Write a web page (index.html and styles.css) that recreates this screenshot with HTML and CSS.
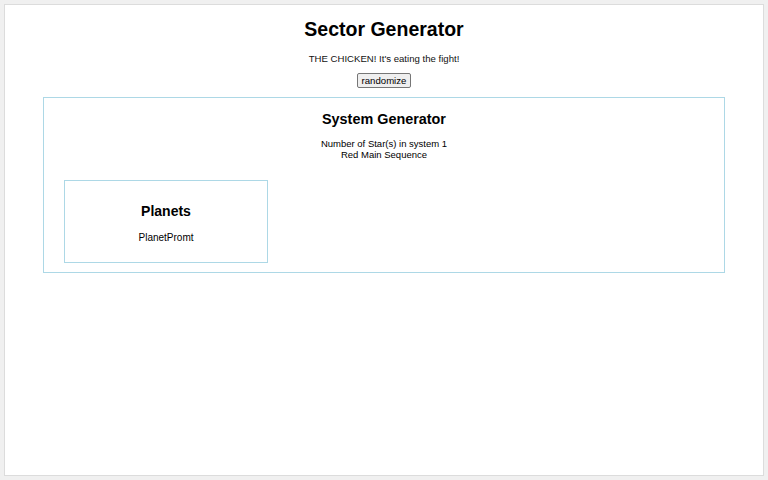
FILE: index.html
```html
<!DOCTYPE html>
<html>
<head>
<meta charset="utf-8">
<link rel="stylesheet" href="styles.css">
</head>
<body>
<div class="frame">
  <h1 class="title">Sector Generator</h1>
  <p class="quote">THE CHICKEN! It's eating the fight!</p>
  <div class="actions"><button class="btn">randomize</button></div>
  <section class="system">
    <h2 class="sys-title">System Generator</h2>
    <div class="sys-info">
      <div>Number of Star(s) in system 1</div>
      <div>Red Main Sequence</div>
    </div>
    <div class="planets">
      <h3 class="pl-title">Planets</h3>
      <p class="pl-text">PlanetPromt</p>
    </div>
  </section>
</div>
</body>
</html>
```
FILE: styles.css
```css
html, body { margin: 0; padding: 0; }
body {
  background: #f0f0f0;
  font-family: "Liberation Sans", Arial, sans-serif;
  color: #000;
  padding: 4px;
  height: 480px;
  box-sizing: border-box;
}
.frame {
  background: #fff;
  border: 1px solid #dcdcdc;
  height: 472px;
  box-sizing: border-box;
  padding: 0 38px;
  text-align: center;
}
.title {
  margin: 0;
  padding-top: 12px;
  font-size: 19.5px;
  line-height: 24px;
  font-weight: bold;
}
.quote {
  margin: 0;
  padding-top: 12px;
  font-size: 9.6px;
  line-height: 12px;
  color: #111;
}
.actions { padding-top: 8px; line-height: 0; }
.btn {
  font-family: "Liberation Sans", Arial, sans-serif;
  font-size: 9.6px;
  line-height: 11px;
  padding: 1px 4px;
  border: 1px solid #767676;
  border-radius: 2px;
  background: #efefef;
  color: #000;
}
.system {
  margin-top: 9px;
  border: 1px solid #add8e6;
  padding: 0 20px 9px;
  text-align: center;
}
.sys-title {
  margin: 0;
  padding-top: 12px;
  font-size: 14.4px;
  line-height: 18px;
  font-weight: bold;
}
.sys-info {
  margin-top: 10px;
  font-size: 9.5px;
  line-height: 11px;
}
.planets {
  margin-top: 20px;
  width: 204px;
  height: 83px;
  box-sizing: border-box;
  border: 1px solid #add8e6;
  text-align: center;
}
.pl-title {
  margin: 0;
  padding-top: 22px;
  font-size: 14px;
  line-height: 17px;
  font-weight: bold;
}
.pl-text {
  margin: 0;
  padding-top: 12px;
  font-size: 10px;
  line-height: 12px;
}
```
